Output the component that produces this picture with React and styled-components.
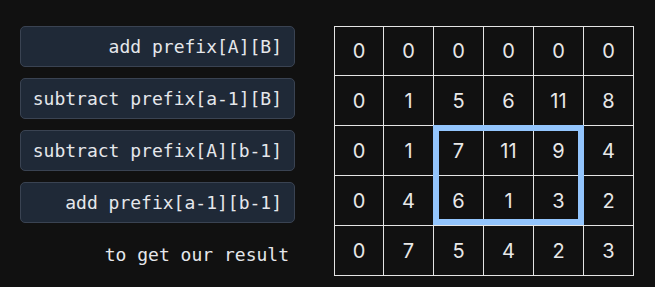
import React from 'react';
import styled, { createGlobalStyle } from 'styled-components';

const GlobalStyle = createGlobalStyle`
  html, body {
    margin: 0;
    padding: 0;
    background: #111111;
  }
`;

const steps = [
  'add prefix[A][B]',
  'subtract prefix[a-1][B]',
  'subtract prefix[A][b-1]',
  'add prefix[a-1][b-1]',
];

const grid = [
  [0, 0, 0, 0, 0, 0],
  [0, 1, 5, 6, 11, 8],
  [0, 1, 7, 11, 9, 4],
  [0, 4, 6, 1, 3, 2],
  [0, 7, 5, 4, 2, 3],
];

function App() {
  return (
    <Page>
      <GlobalStyle />
      <Steps>
        {steps.map((step) => (
          <Step key={step}>{step}</Step>
        ))}
        <Result>to get our result</Result>
      </Steps>

      <Board>
        {grid.map((row, r) =>
          row.map((value, c) => <Cell key={`${r}-${c}`}>{value}</Cell>)
        )}
        <Highlight />
      </Board>
    </Page>
  );
}

export default App;

const Page = styled.div`
  display: flex;
  align-items: flex-start;
  gap: 40px;
  padding: 26px 20px 0;
  height: 287px;
  box-sizing: border-box;
  overflow: hidden;
  background: #111111;
`;

const Steps = styled.div`
  display: flex;
  flex-direction: column;
  gap: 11px;
  width: 275px;
`;

const Step = styled.div`
  height: 41px;
  box-sizing: border-box;
  display: flex;
  align-items: center;
  justify-content: flex-end;
  padding: 0 12px;
  background: #1f2937;
  border: 1px solid #3a4352;
  border-radius: 5px;
  color: #e5e7eb;
  font-family: 'DejaVu Sans Mono', 'Liberation Mono', monospace;
  font-size: 18px;
  white-space: nowrap;
`;

const Result = styled.div`
  height: 41px;
  display: flex;
  align-items: center;
  justify-content: flex-end;
  padding-right: 6px;
  color: #e5e7eb;
  font-family: 'DejaVu Sans Mono', 'Liberation Mono', monospace;
  font-size: 18px;
`;

const Board = styled.div`
  position: relative;
  display: grid;
  grid-template-columns: 48px repeat(5, 49px);
  grid-template-rows: 48px repeat(4, 49px);
  gap: 1px;
  padding: 1px;
  background: #e5e5e5;
  margin-left: -1px;
`;

const Cell = styled.div`
  display: flex;
  align-items: center;
  justify-content: center;
  background: #111111;
  color: #e8e8e8;
  font-family: Inter, 'Noto Sans', sans-serif;
  font-size: 20px;
`;

const Highlight = styled.div`
  position: absolute;
  left: 99px;
  top: 99px;
  width: 151px;
  height: 100px;
  box-sizing: border-box;
  border: 6px solid #93c5fd;
  pointer-events: none;
`;
